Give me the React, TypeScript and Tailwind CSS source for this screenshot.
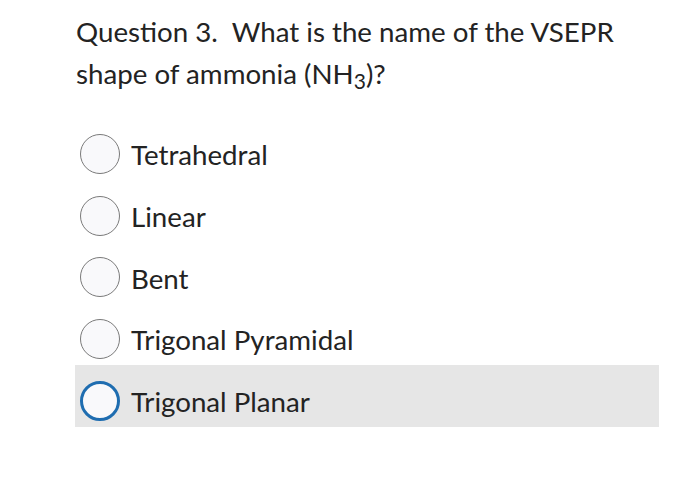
import React from 'react';

const options = ['Tetrahedral', 'Linear', 'Bent', 'Trigonal Pyramidal', 'Trigonal Planar'];

export default function App() {
  const selected = 4;
  return (
    <main className="w-[700px] h-[487px] bg-white font-['Lato',sans-serif] text-[#232323]">
      <div className="pl-[76px] pt-[11px] w-[660px]">
        <h1 className="text-[27.7px] leading-[42px] font-normal">
          Question 3.&nbsp; What is the name of the VSEPR shape of ammonia (NH<sub className="text-[21px]">3</sub>)?
        </h1>
      </div>
      <ul className="mt-[24px] ml-[75px] w-[584px]">
        {options.map((opt, i) => (
          <li
            key={opt}
            className={`flex items-center h-[61.6px] pt-[9px] pl-[5px] ${i === selected ? 'bg-[#e6e6e6]' : ''}`}
          >
            <span
              className={`w-[40px] h-[40px] rounded-full shrink-0 bg-[#f9f9fb] ${
                i === selected ? 'border-[3px] border-[#1f6db0]' : 'border-[1.5px] border-[#7a7a7a]'
              }`}
            />
            <span className="ml-[11px] text-[27.7px] leading-none pt-[2px]">{opt}</span>
          </li>
        ))}
      </ul>
    </main>
  );
}
